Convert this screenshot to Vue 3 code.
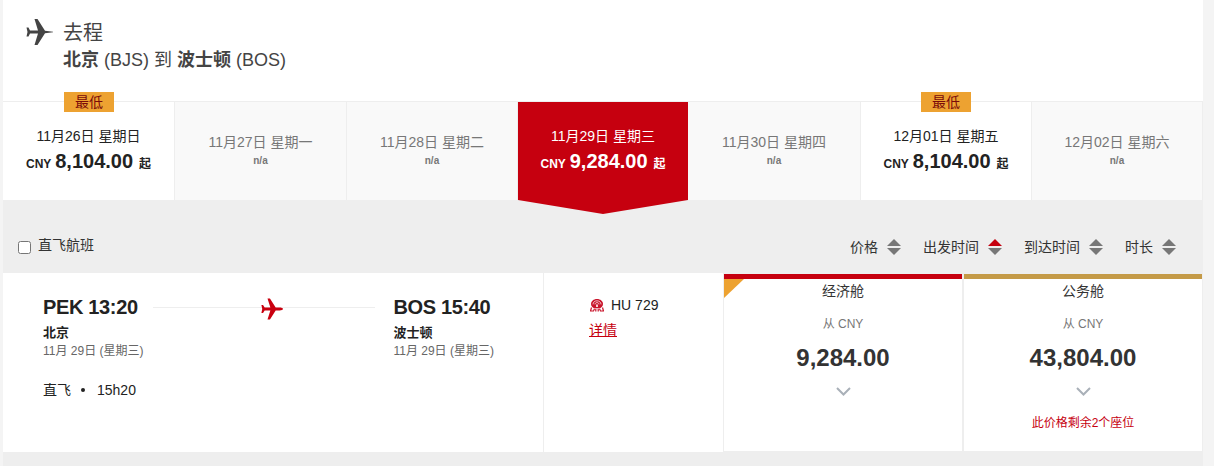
<script setup>
const dates = [
  { label: '11月26日 星期日', price: '8,104.00', lowest: true },
  { label: '11月27日 星期一' },
  { label: '11月28日 星期二' },
  { label: '11月29日 星期三', price: '9,284.00', active: true },
  { label: '11月30日 星期四' },
  { label: '12月01日 星期五', price: '8,104.00', lowest: true },
  { label: '12月02日 星期六' }
]

const sorts = [
  { label: '价格' },
  { label: '出发时间', active: true },
  { label: '到达时间' },
  { label: '时长' }
]

const fares = [
  { name: '经济舱', price: '9,284.00', type: 'economy' },
  { name: '公务舱', price: '43,804.00', type: 'business', note: '此价格剩余2个座位' }
]

const ends = [
  { code: 'PEK 13:20', city: '北京', date: '11月 29日 (星期三)' },
  { code: 'BOS 15:40', city: '波士顿', date: '11月 29日 (星期三)' }
]

const headPlane = 'M27 12.8L19 11.8L11.5 0H8.5L12 11.5H4L2.5 8.5H.5L1.5 13L.5 17.5H2.5L4 14.5H12L8.5 26H11.5L19 14.2L27 13.2Z'
const linePlane = 'M27 13C27 12 25 11.3 23 11.3H18L11 0H8L11.5 11.3H4.5L2.5 8H.5L1.5 13L.5 18H2.5L4.5 14.7H11.5L8 26H11L18 14.7H23C25 14.7 27 14 27 13Z'
</script>

<template>
  <div class="page">
    <header class="head">
      <svg class="head-plane" viewBox="0 0 27 26"><path :d="headPlane" /></svg>
      <div>
        <div class="head-title">去程</div>
        <div class="head-route"><b>北京</b> (BJS) 到 <b>波士顿</b> (BOS)</div>
      </div>
    </header>

    <div class="dates">
      <div
        v-for="d in dates"
        :key="d.label"
        class="date"
        :class="{ 'has-price': d.price, active: d.active }"
      >
        <span v-if="d.lowest" class="badge">最低</span>
        <div class="date-label">{{ d.label }}</div>
        <div v-if="d.price" class="date-price">
          <span class="cur">CNY</span> <span class="amount">{{ d.price }}</span> <span class="cur from">起</span>
        </div>
        <div v-else class="na">n/a</div>
      </div>
    </div>

    <div class="filters">
      <label class="direct"><input type="checkbox" /><span>直飞航班</span></label>
      <div class="sorts">
        <div v-for="s in sorts" :key="s.label" class="sort">
          <span class="sort-label">{{ s.label }}</span>
          <span class="arrows" :class="{ active: s.active }"><i class="up"></i><i class="down"></i></span>
        </div>
      </div>
    </div>

    <div class="flight">
      <div class="segment">
        <div class="ends">
          <div v-for="(e, i) in ends" :key="e.code" class="end-wrap">
            <div class="end">
              <div class="code">{{ e.code }}</div>
              <div class="city">{{ e.city }}</div>
              <div class="day">{{ e.date }}</div>
            </div>
            <div v-if="i === 0" class="line">
              <svg class="line-plane" viewBox="0 0 27 26"><path :d="linePlane" /></svg>
            </div>
          </div>
        </div>
        <div class="stops">直飞<i class="dot"></i>15h20</div>
      </div>

      <div class="carrier">
        <div class="flight-no">
          <svg class="lion" viewBox="0 0 14 13">
            <path d="M7 0C3.6 0 1 2.2 1 5C1 7 2.4 8.6 4 9.2H10C11.6 8.6 13 7 13 5C13 2.2 10.4 0 7 0Z" fill="#c9142b" />
            <path d="M3 5.4C3 3.2 4.8 1.8 7 1.8S11 3.2 11 5.4M5 5.4C5 4.2 5.9 3.6 7 3.6S9 4.2 9 5.4" fill="none" stroke="#fff" stroke-width=".7" />
            <path d="M6.2 5.4H7.8V8H6.2Z" fill="#fff" />
            <path d="M1.5 8.5L.5 12H3.5L4.5 9.8M12.5 8.5L13.5 12H10.5L9.5 9.8M5.8 9.8V12.6M8.2 9.8V12.6" fill="none" stroke="#c9142b" stroke-width="1.2" />
          </svg>
          <span>HU 729</span>
        </div>
        <a class="details">详情</a>
      </div>

      <div v-for="f in fares" :key="f.name" class="fare" :class="f.type">
        <i v-if="f.type === 'economy'" class="corner"></i>
        <div class="fare-name">{{ f.name }}</div>
        <div class="fare-from">从 CNY</div>
        <div class="fare-price">{{ f.price }}</div>
        <svg class="chevron" viewBox="0 0 15 9"><path d="M1 1L7.5 7.5L14 1" /></svg>
        <div v-if="f.note" class="fare-note">{{ f.note }}</div>
      </div>
    </div>
  </div>
</template>

<style scoped>
.page {
  width: 1200px;
  height: 466px;
  margin-left: 3px;
  background: #eeeeee;
  color: #333;
  font-family: "Liberation Sans", "Noto Sans CJK SC", sans-serif;
}

.head {
  display: flex;
  gap: 10px;
  height: 101px;
  box-sizing: border-box;
  padding: 19px 0 0 23px;
  background: #fff;
  color: #444;
}
.head-plane {
  width: 27px;
  height: 26px;
  fill: #444;
}
.head-title {
  margin-top: 1px;
  font-size: 20px;
  line-height: 26px;
}
.head-route {
  margin-top: 1px;
  font-size: 18px;
  line-height: 26px;
}

.dates {
  display: grid;
  grid-template-columns: 172px 172px 171px 170px 173px 171px 170px;
  grid-template-rows: 98px;
  height: 99px;
  width: 1199px;
  border-top: 1px solid #eee;
  box-sizing: border-box;
}
.date {
  position: relative;
  display: flex;
  flex-direction: column;
  align-items: center;
  padding-top: 30px;
  box-sizing: border-box;
  background: #f9f9f9;
  border-right: 1px solid #eee;
  color: #777;
  font-size: 14px;
}
.date:last-child {
  border-right: 0;
}
.date.has-price {
  padding-top: 24px;
  background: #fff;
  color: #222;
}
.date.active {
  height: 112px;
  padding-top: 24px;
  border-right: 0;
  background: #c6000f;
  color: #fff;
  clip-path: polygon(0 0, 100% 0, 100% 87.5%, 50% 100%, 0 87.5%);
}
.badge {
  position: absolute;
  top: -10px;
  left: 61px;
  width: 50px;
  height: 20px;
  background: #eda231;
  color: #7a0a0a;
  text-align: center;
  line-height: 20px;
  font-size: 14px;
}
.date:nth-child(6) .badge {
  left: 60px;
}
.date-label {
  line-height: 20px;
}
.date-price {
  margin-top: 2px;
  line-height: 26px;
  white-space: nowrap;
  font-weight: bold;
}
.amount {
  font-size: 20px;
}
.cur {
  font-size: 12px;
}
.from {
  margin-left: 2px;
}
.na {
  margin-top: 1px;
  font-size: 10px;
  font-weight: bold;
  line-height: 16px;
}

.filters {
  display: flex;
  justify-content: space-between;
  align-items: center;
  height: 73px;
  box-sizing: border-box;
  padding: 20px 27px 0 15px;
  font-size: 14px;
  color: #333;
}
.direct {
  display: flex;
  align-items: center;
  margin-top: -2px;
}
.direct span {
  margin-top: -3px;
}
.direct input {
  width: 13px;
  height: 13px;
  margin: 3px 7px 0 0;
}
.sorts {
  display: flex;
  gap: 22px;
}
.sort {
  display: flex;
  align-items: center;
  gap: 9px;
}
.sort-label {
  margin-top: -2px;
}
.arrows {
  display: flex;
  flex-direction: column;
  gap: 2px;
}
.arrows i {
  width: 0;
  height: 0;
  border-left: 7px solid transparent;
  border-right: 7px solid transparent;
}
.up {
  border-bottom: 7px solid #777;
}
.down {
  border-top: 7px solid #777;
}
.arrows.active .up {
  border-bottom-color: #c6000f;
}

.flight {
  display: flex;
  height: 179px;
}
.segment {
  width: 541px;
  box-sizing: border-box;
  padding: 22px 0 0 40px;
  background: #fff;
  border-right: 1px solid #eee;
}
.ends {
  display: flex;
}
.end-wrap {
  display: flex;
}
.end {
  white-space: nowrap;
}
.code {
  font-size: 20px;
  font-weight: bold;
  letter-spacing: -0.35px;
  line-height: 24px;
  color: #222;
}
.city {
  margin-top: 5px;
  font-size: 13px;
  font-weight: bold;
  line-height: 18px;
  color: #222;
}
.day {
  margin-top: 1px;
  font-size: 12px;
  line-height: 17px;
  color: #666;
}
.line {
  position: relative;
  width: 222px;
  height: 1px;
  margin: 12px 18px 0 10px;
  background: #eee;
}
.line-plane {
  position: absolute;
  left: 108px;
  top: -9px;
  width: 22px;
  height: 22px;
  fill: #c9000f;
}
.stops {
  display: flex;
  align-items: center;
  margin-top: 20px;
  font-size: 14px;
  line-height: 20px;
  color: #222;
}
.dot {
  width: 4px;
  height: 4px;
  margin: 0 12px 0 10px;
  border-radius: 50%;
  background: #222;
}

.carrier {
  width: 180px;
  box-sizing: border-box;
  padding: 23px 0 0 45px;
  background: #fff;
  border-right: 1px solid #eee;
  font-size: 14px;
}
.flight-no {
  display: flex;
  align-items: center;
  gap: 7px;
  line-height: 18px;
  color: #222;
}
.lion {
  width: 14px;
  height: 13px;
  margin-left: 1px;
}
.details {
  display: block;
  margin-top: 7px;
  line-height: 18px;
  color: #c6000f;
  text-decoration: underline;
}

.fare {
  position: relative;
  display: flex;
  flex-direction: column;
  align-items: center;
  width: 238px;
  height: 177px;
  margin-top: 1px;
  box-sizing: border-box;
  border-top: 5px solid;
  background: #fff;
  text-align: center;
}
.fare + .fare {
  margin-left: 2px;
}
.fare.economy {
  border-top-color: #c6000f;
}
.fare.business {
  border-top-color: #c49a47;
}
.corner {
  position: absolute;
  top: 0;
  left: 0;
  width: 20px;
  height: 19px;
  background: #eda231;
  clip-path: polygon(0 0, 100% 0, 0 100%);
}
.fare-name {
  font-size: 14px;
  line-height: 20px;
  margin-top: 2px;
}
.fare-from {
  margin-top: 14px;
  font-size: 12px;
  line-height: 18px;
  color: #777;
}
.fare-price {
  margin-top: 10px;
  font-size: 24px;
  font-weight: bold;
  line-height: 30px;
  color: #333;
}
.chevron {
  width: 15px;
  height: 9px;
  margin-top: 14px;
  fill: none;
  stroke: #a9b0b8;
  stroke-width: 2;
}
.fare-note {
  margin-top: 18px;
  font-size: 12px;
  line-height: 18px;
  color: #c6000f;
}
</style>

<style>
html, body {
  margin: 0;
  background: #f4f4f4;
}
</style>
